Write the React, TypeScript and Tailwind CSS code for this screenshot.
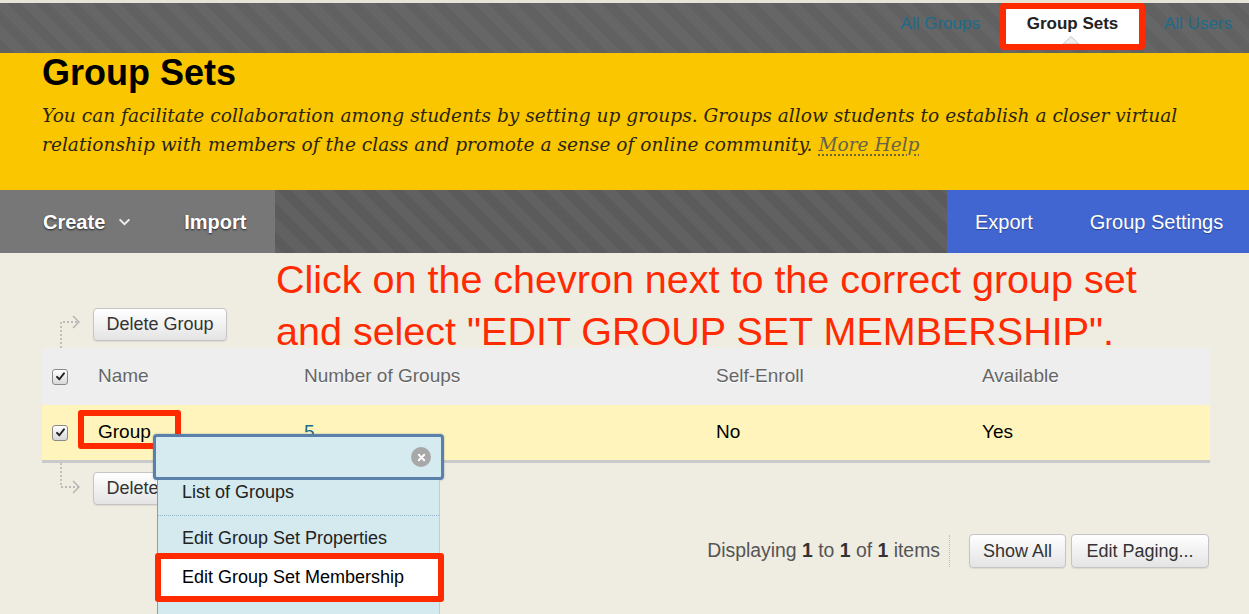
import React from 'react';

function CheckBox() {
  return (
    <div className="w-[16px] h-[16px] rounded-[3px] border border-[#8a8a8a] bg-gradient-to-b from-white to-[#d8d8d8] flex items-center justify-center">
      <svg viewBox="0 0 12 12" className="w-[11px] h-[11px]">
        <path d="M2.2 6.4 L4.8 9 L9.8 2.6" fill="none" stroke="#222" strokeWidth="2.1" strokeLinecap="round" strokeLinejoin="round" />
      </svg>
    </div>
  );
}

function Btn({ label, w }: { label: string; w: string }) {
  return (
    <button className={`${w} h-[33px] rounded-[4px] border border-[#c4c4c4] bg-gradient-to-b from-white to-[#e4e4e4] text-[18px] text-[#333] shadow-[0_1px_1px_rgba(0,0,0,0.08)] flex items-center justify-center`}>
      {label}
    </button>
  );
}

export default function App() {
  return (
    <div className="relative w-[1249px] h-[614px] overflow-hidden bg-[#efece2] font-['Liberation_Sans',Arial,sans-serif]">
      {/* top strip */}
      <div className="h-[3px] bg-[#e6e3d9]" />

      {/* tabs bar */}
      <div className="h-[50px] flex items-start justify-end pr-[17px] bg-[repeating-linear-gradient(45deg,#616161_0px,#616161_10px,#666666_10px,#666666_20px)]">
        <a className="mt-[11px] text-[17px] leading-[20px] text-[#1d6b8a]">All Groups</a>
        <div className="relative ml-[20px] mr-[19px] h-[47px] w-[145px] rounded-[4px] border-[6px] border-[#ff2a00] bg-white flex justify-center pt-[5px]">
          <span className="text-[17px] leading-[20px] font-bold text-[#222]">Group Sets</span>
          <svg viewBox="0 0 16 8" className="absolute bottom-0 left-[57px] w-[16px] h-[8px]">
            <path d="M0 8 L8 0.5 L16 8 Z" fill="#eeeeee" stroke="#c9c9c9" strokeWidth="1" />
          </svg>
        </div>
        <a className="mt-[11px] text-[17px] leading-[20px] text-[#1d6b8a]">All Users</a>
      </div>

      {/* yellow header */}
      <div className="h-[137px] bg-[#fac600] px-[42px]">
        <h1 className="text-[36px] leading-[40px] font-bold text-black">Group Sets</h1>
        <p className="mt-[8px] font-['DejaVu_Serif',Georgia,serif] italic text-[18.6px] leading-[29px] text-[#2a2414] whitespace-nowrap">
          You can facilitate collaboration among students by setting up groups. Groups allow students to establish a closer virtual
          <br />
          relationship with members of the class and promote a sense of online community.{' '}
          <a className="text-[#67624a] underline decoration-dotted decoration-[#67624a] underline-offset-[4px]">More Help</a>
        </p>
      </div>

      {/* action bar */}
      <div className="h-[63px] flex bg-[repeating-linear-gradient(45deg,#5b5b5b_0px,#5b5b5b_10px,#616161_10px,#616161_20px)]">
        <div className="w-[275px] bg-[#777777] flex items-center pl-[43px] text-white font-bold text-[20px] [text-shadow:0_1px_2px_rgba(0,0,0,0.7)]">
          <span>Create</span>
          <svg viewBox="0 0 14 9" className="ml-[13px] w-[13px] h-[8px]">
            <path d="M1.5 1.5 L7 7 L12.5 1.5" fill="none" stroke="#eeeeee" strokeWidth="2.2" />
          </svg>
          <span className="ml-[53px]">Import</span>
        </div>
        <div className="flex-1" />
        <div className="w-[302px] bg-[#4166d1] flex items-center pl-[28px] text-white text-[20px] [text-shadow:0_1px_1px_rgba(0,0,0,0.35)]">
          <span>Export</span>
          <span className="ml-[57px]">Group Settings</span>
        </div>
      </div>

      {/* instruction + delete */}
      <div className="flex h-[95px]">
        <div className="w-[276px] shrink-0 flex items-end pl-[58px]">
          <svg viewBox="0 0 24 33" className="w-[24px] h-[33px]">
            <path d="M3 33 L3 7 L21 7" fill="none" stroke="#a9a9a9" strokeWidth="1.3" strokeDasharray="2 2" />
            <path d="M15 1 L21 7 L15 13" fill="none" stroke="#b0b0b0" strokeWidth="1.3" />
          </svg>
          <div className="ml-[11px] mb-[7px]">
            <Btn label="Delete Group" w="w-[134px]" />
          </div>
        </div>
        <p className="relative z-10 text-[39.5px] leading-[52px] text-[#ff2a00] whitespace-nowrap">
          Click on the chevron next to the correct group set
          <br />
          and select "EDIT GROUP SET MEMBERSHIP".
        </p>
      </div>

      {/* table */}
      <div className="mx-[42px] w-[1168px] text-[19px]">
        <div className="h-[57px] bg-[#eeeeee] flex items-center text-[#666] [text-shadow:0_1px_0_#fff]">
          <div className="w-[56px] pl-[10px]"><CheckBox /></div>
          <div className="w-[206px]">Name</div>
          <div className="w-[412px]">Number of Groups</div>
          <div className="w-[266px]">Self-Enroll</div>
          <div>Available</div>
        </div>
        <div className="relative h-[58px] bg-[#fff5bc] border-b-[3px] border-[#cacaca] flex items-center text-black">
          <div className="w-[56px] pl-[10px]"><CheckBox /></div>
          <div className="w-[206px]">Group</div>
          <div className="w-[412px] text-[#1d6b8a]">5</div>
          <div className="w-[266px]">No</div>
          <div>Yes</div>
          <div className="absolute left-[36px] top-[5px] w-[103px] h-[39px] rounded-[3px] border-[6px] border-[#ff2a00]" />
        </div>
      </div>

      {/* lower delete (the menu lies over it) */}
      <div className="flex items-start pl-[58px]">
        <svg viewBox="0 0 24 32" className="w-[24px] h-[32px]">
          <path d="M3 0 L3 24 L21 24" fill="none" stroke="#a9a9a9" strokeWidth="1.3" strokeDasharray="2 2" />
          <path d="M15 18 L21 24 L15 30" fill="none" stroke="#b0b0b0" strokeWidth="1.3" />
        </svg>
        <div className="ml-[11px] mt-[9px]">
          <Btn label="Delete Group" w="w-[134px]" />
        </div>
      </div>

      {/* pagination */}
      <div className="mt-[29px] flex items-center justify-end pr-[40px]">
        <span className="text-[19.4px] text-[#555]">
          Displaying <b className="text-[#333]">1</b> to <b className="text-[#333]">1</b> of <b className="text-[#333]">1</b> items
        </span>
        <div className="ml-[9px] mr-[19px] h-[32px] border-l border-dotted border-[#bbb]" />
        <Btn label="Show All" w="w-[97px] h-[34px]" />
        <div className="ml-[5px]">
          <Btn label="Edit Paging..." w="w-[138px] h-[34px]" />
        </div>
      </div>

      {/* context menu */}
      <div className="absolute left-[153px] top-[434px] w-[291px] h-[190px] text-[18px] text-[#222]">
        <div className="h-[46px] rounded-[4px] border-[3px] border-[#5b81ab] bg-[#d5ebef] shadow-[0_0_2px_rgba(60,100,150,0.5)] flex items-center justify-end pr-[10px]">
          <div className="w-[20px] h-[20px] rounded-full bg-[#a8a8a8] flex items-center justify-center">
            <svg viewBox="0 0 10 10" className="w-[9px] h-[9px]">
              <path d="M2 2 L8 8 M8 2 L2 8" stroke="#fff" strokeWidth="2.2" strokeLinecap="round" />
            </svg>
          </div>
        </div>
        <div className="mx-[4px] h-[144px] bg-[#d4eaee] border-l border-[#9a9a9a] border-r border-r-[#c2cfd2]">
          <div className="h-[36px] pl-[24px] pt-[1px] leading-[22px] border-b border-dotted border-[#97b3cc]">List of Groups</div>
          <div className="h-[36px] pl-[24px] pt-[11px] leading-[22px]">Edit Group Set Properties</div>
        </div>
        <div className="absolute left-[2px] top-[119px] w-[289px] h-[49px] rounded-[3px] border-[6px] border-[#ff2a00] bg-white flex items-center pl-[21px] text-black">
          Edit Group Set Membership
        </div>
      </div>
    </div>
  );
}
